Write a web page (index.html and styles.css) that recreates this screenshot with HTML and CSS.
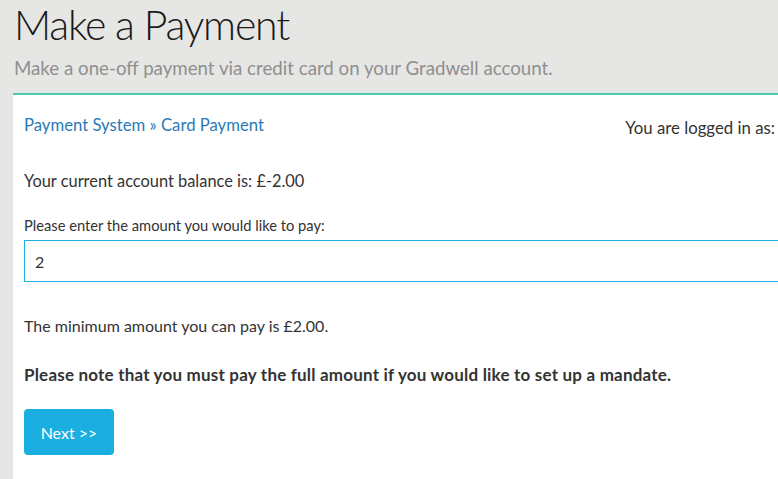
FILE: index.html
```html
<!DOCTYPE html>
<html lang="en">
<head>
<meta charset="utf-8">
<title>Make a Payment</title>
<link rel="stylesheet" href="styles.css">
</head>
<body>
<div class="page">
  <header class="page-header">
    <h1 class="title">Make a Payment</h1>
    <p class="subtitle">Make a one-off payment via credit card on your Gradwell account.</p>
  </header>
  <main class="panel">
    <div class="topbar">
      <nav class="crumbs"><a href="#">Payment System</a> &raquo; <a href="#">Card Payment</a></nav>
      <div class="login">You are logged in as:</div>
    </div>
    <p class="balance">Your current account balance is: &pound;-2.00</p>
    <form class="pay-form">
      <label class="field-label" for="amount">Please enter the amount you would like to pay:</label>
      <input class="field-input" id="amount" type="text" value="2">
      <p class="min">The minimum amount you can pay is &pound;2.00.</p>
      <p class="note">Please note that you must pay the full amount if you would like to set up a mandate.</p>
      <button class="btn" type="button">Next &gt;&gt;</button>
    </form>
  </main>
</div>
</body>
</html>
```

FILE: styles.css
```css
html, body {
  margin: 0;
  padding: 0;
  overflow: hidden;
}
body {
  background: #e6e6e4;
  font-family: "Lato", "Open Sans", sans-serif;
  color: #333;
  height: 479px;
}
.page {
  width: 830px;
}
.page-header {
  padding: 0 0 0 14px;
  height: 93px;
  box-sizing: border-box;
}
.title {
  margin: 0;
  padding-top: 3px;
  font-size: 41px;
  line-height: 44px;
  font-weight: 300;
  letter-spacing: -1.2px;
  color: #1a1a1a;
}
.subtitle {
  margin: 9px 0 0;
  font-size: 18.7px;
  line-height: 24px;
  color: #8f8f8f;
}
.panel {
  margin-left: 13px;
  background: #fff;
  border-top: 2px solid #48c9b2;
  padding: 19px 0 24px 11px;
  min-height: 380px;
}
.topbar {
  display: flex;
  justify-content: space-between;
  align-items: flex-start;
  padding-right: 55px;
}
.crumbs {
  font-size: 16.7px;
  line-height: 22px;
  color: #2a7ab8;
}
.crumbs a {
  color: #2a7ab8;
  text-decoration: none;
}
.login {
  font-size: 16.8px;
  line-height: 22px;
  padding-top: 3px;
}
.balance {
  margin: 31px 0 0;
  font-size: 16.4px;
  line-height: 22px;
}
.pay-form {
  margin-top: 24px;
  display: flex;
  flex-direction: column;
  align-items: flex-start;
}
.field-label {
  font-size: 14.7px;
  line-height: 18px;
  margin-bottom: 6px;
}
.field-input {
  box-sizing: border-box;
  width: 100%;
  height: 42px;
  border: 1px solid #1ab0e4;
  padding: 0 10px;
  font-family: inherit;
  font-size: 16px;
  color: #333;
  outline: none;
}
.min {
  margin: 33px 0 0;
  font-size: 16px;
  line-height: 22px;
}
.note {
  margin: 27px 0 0;
  font-size: 17px;
  line-height: 22px;
  font-weight: 700;
  letter-spacing: 0.2px;
}
.btn {
  margin-top: 23px;
  width: 90px;
  height: 46px;
  border: none;
  border-radius: 4px;
  background: #1baee0;
  color: #fff;
  font-family: inherit;
  font-size: 16px;
  padding: 0;
}
```
